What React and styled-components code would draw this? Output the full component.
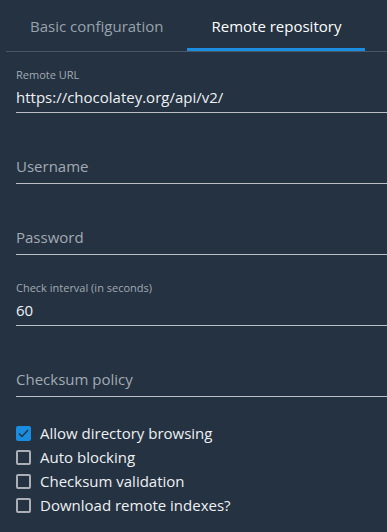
import React from "react";
import styled, { createGlobalStyle } from "styled-components";

const GlobalStyle = createGlobalStyle`
  html, body {
    margin: 0;
    padding: 0;
    background: #243242;
  }
  body {
    font-family: "Open Sans", "Noto Sans", sans-serif;
  }
`;

const Container = styled.div`
  width: 387px;
  height: 532px;
  background: #243242;
  overflow: hidden;
`;

const TabBar = styled.div`
  display: flex;
  margin-left: 6px;
  border-bottom: 1px solid #4a5765;
`;

const Tab = styled.div`
  height: 45px;
  padding: 3px 24px 0;
  display: flex;
  align-items: center;
  justify-content: center;
  font-size: 15px;
  color: ${(p) => (p.active ? "#ffffff" : "#99a2ab")};
  border-bottom: 3px solid ${(p) => (p.active ? "#1a8de0" : "transparent")};
  box-sizing: content-box;
  white-space: nowrap;
`;

const Form = styled.div`
  padding: 16px 0 0 16px;
  display: flex;
  flex-direction: column;
  gap: 26px;
`;

const Field = styled.div`
  display: flex;
  flex-direction: column;
`;

const Label = styled.div`
  font-size: 11px;
  line-height: 14px;
  height: 14px;
  color: #a3aab2;
`;

const Input = styled.div`
  display: flex;
  align-items: center;
  font-size: 15px;
  color: ${(p) => (p.placeholder ? "#a3aab2" : "#eef0f2")};
  border-bottom: 1px solid #b9bfc5;
  padding-bottom: ${(p) => (p.placeholder ? "4px" : "1px")};
  box-sizing: content-box;
  height: ${(p) => (p.placeholder ? "26px" : "29px")};
`;

const Checks = styled.div`
  padding: 24px 0 0 16px;
  display: flex;
  flex-direction: column;
`;

const CheckRow = styled.div`
  display: flex;
  align-items: center;
  height: 24px;
  gap: 9px;
  font-size: 15px;
  color: #eef0f2;
`;

const Box = styled.div`
  width: 15px;
  height: 15px;
  flex-shrink: 0;
  box-sizing: border-box;
  border-radius: 2px;
  border: ${(p) => (p.checked ? "none" : "2px solid #a9afb5")};
  background: ${(p) => (p.checked ? "#1a8de0" : "transparent")};
  display: flex;
  align-items: center;
  justify-content: center;
`;

const fields = [
  { label: "Remote URL", value: "https://chocolatey.org/api/v2/" },
  { placeholder: "Username" },
  { placeholder: "Password" },
  { label: "Check interval (in seconds)", value: "60" },
  { placeholder: "Checksum policy" },
];

const checks = [
  { label: "Allow directory browsing", checked: true },
  { label: "Auto blocking" },
  { label: "Checksum validation" },
  { label: "Download remote indexes?" },
];

const App = () => {
  return (
    <Container>
      <GlobalStyle />
      <TabBar>
        <Tab>Basic configuration</Tab>
        <Tab active>Remote repository</Tab>
      </TabBar>
      <Form>
        {fields.map((f, i) => (
          <Field key={i}>
            <Label>{f.label}</Label>
            <Input placeholder={f.placeholder ? 1 : 0}>
              {f.value || f.placeholder}
            </Input>
          </Field>
        ))}
      </Form>
      <Checks>
        {checks.map((c) => (
          <CheckRow key={c.label}>
            <Box checked={c.checked}>
              {c.checked && (
                <svg width="11" height="9" viewBox="0 0 11 9">
                  <path
                    d="M1 4.5 L4 7.5 L10 1"
                    fill="none"
                    stroke="#243242"
                    strokeWidth="1.4"
                  />
                </svg>
              )}
            </Box>
            {c.label}
          </CheckRow>
        ))}
      </Checks>
    </Container>
  );
};

export default App;
